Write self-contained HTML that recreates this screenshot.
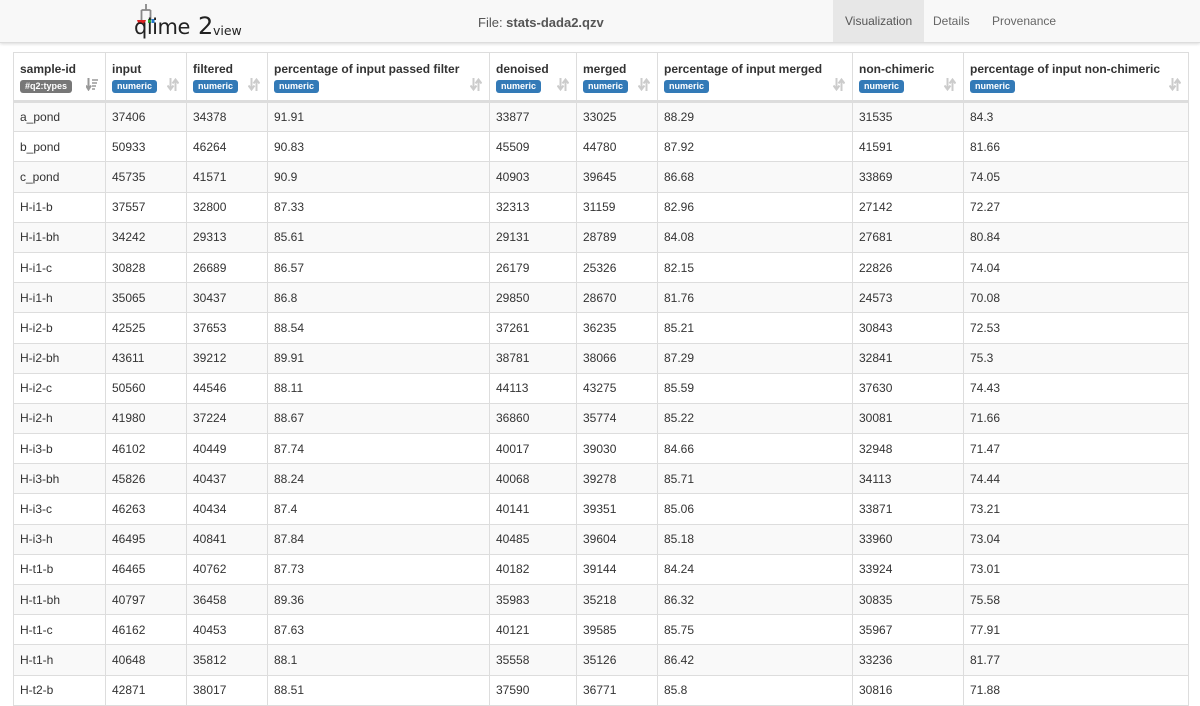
<!DOCTYPE html>
<html><head><meta charset="utf-8">
<style>
*{box-sizing:border-box;margin:0;padding:0}
body{width:1200px;height:687px;overflow:hidden;background:#fff;font-family:"Liberation Sans",Arial,sans-serif;font-size:12px;color:#333}
.nav{position:absolute;left:0;top:0;width:1200px;height:43px;background:#f8f8f8;border-bottom:1px solid #ddd;box-shadow:0 1px 3px rgba(0,0,0,.15)}
.logo{position:absolute;left:133px;top:3px}
.file{position:absolute;left:478px;top:15px;font-size:13px;color:#555}
.file b{color:#555}
.tab{position:absolute;top:0;height:42px;line-height:43px;font-size:12px;color:#666;padding:0 12px}
.tab.act{background:#e7e7e7;color:#555}
table{position:absolute;left:13px;top:52px;border-collapse:collapse;width:1175px;table-layout:fixed}
th,td{border:1px solid #ddd;text-align:left;padding:0 6px;vertical-align:middle}
th{height:49px;font-weight:bold;font-size:12px;position:relative;border-bottom:3px solid #ddd;vertical-align:top;padding-top:9px}
td{height:30.2px;font-size:12px}
tbody tr:nth-child(odd) td{background:#f9f9f9}
.b{display:inline-block;background:#337ab7;color:#fff;font-size:9px;font-weight:bold;padding:1px 5px 2px;border-radius:3px;margin-top:4px;line-height:10px}
.b.g{background:#777}
.s{position:absolute;right:7px;bottom:9px;width:12px;height:13px}
</style></head><body>
<svg width="0" height="0" style="position:absolute"><defs>
<symbol id="so" viewBox="0 0 12 13"><path d="M3.5 0v10M0.5 7.5l3 4 3-4M8.5 13v-10M5.5 5.5l3-4 3 4" stroke="#ccc" stroke-width="2" fill="none"/></symbol>
<symbol id="sa" viewBox="0 0 12 13"><path d="M2.5 0v10M0 7.5l2.5 4 2.5-4" stroke="#999" stroke-width="2" fill="none"/><path d="M6 2h6M6 5h5M6 8h4M6 11h3" stroke="#999" stroke-width="1.6"/></symbol>
</defs></svg>
<div class="nav">
<svg class="logo" width="130" height="36" viewBox="0 0 130 36">
<path d="M13 1v6M8.5 7h9M8.5 7v10M17.5 7v10" stroke="#888" stroke-width="1.8" fill="none"/>
<path d="M4 17h9l-1.5 4h-6z" fill="#d22"/>
<rect x="15" y="16" width="3" height="4" fill="#3a3"/><rect x="18.5" y="16" width="3" height="4" fill="#27c"/>
<text x="1" y="31" font-family="DejaVu Sans" font-size="21" fill="#222" letter-spacing="-0.5">qiime</text>
<text x="65" y="31" font-family="DejaVu Sans" font-size="24" fill="#222">2</text>
<text x="80" y="32" font-family="DejaVu Sans" font-size="12.5" fill="#222">view</text>
</svg>
<div class="file">File: <b>stats-dada2.qzv</b></div>
<div class="tab act" style="left:833px">Visualization</div>
<div class="tab" style="left:921px">Details</div>
<div class="tab" style="left:980px">Provenance</div>
</div>
<table>
<colgroup><col style="width:92px"><col style="width:81px"><col style="width:81px"><col style="width:222px"><col style="width:87px"><col style="width:81px"><col style="width:195px"><col style="width:111px"><col style="width:225px"></colgroup>
<thead><tr>
<th>sample-id<br><span class="b g">#q2:types</span><svg class="s"><use href="#sa"/></svg></th>
<th>input<br><span class="b">numeric</span><svg class="s"><use href="#so"/></svg></th>
<th>filtered<br><span class="b">numeric</span><svg class="s"><use href="#so"/></svg></th>
<th>percentage of input passed filter<br><span class="b">numeric</span><svg class="s"><use href="#so"/></svg></th>
<th>denoised<br><span class="b">numeric</span><svg class="s"><use href="#so"/></svg></th>
<th>merged<br><span class="b">numeric</span><svg class="s"><use href="#so"/></svg></th>
<th>percentage of input merged<br><span class="b">numeric</span><svg class="s"><use href="#so"/></svg></th>
<th>non-chimeric<br><span class="b">numeric</span><svg class="s"><use href="#so"/></svg></th>
<th>percentage of input non-chimeric<br><span class="b">numeric</span><svg class="s"><use href="#so"/></svg></th>
</tr></thead>
<tbody>
<tr><td>a_pond</td><td>37406</td><td>34378</td><td>91.91</td><td>33877</td><td>33025</td><td>88.29</td><td>31535</td><td>84.3</td></tr>
<tr><td>b_pond</td><td>50933</td><td>46264</td><td>90.83</td><td>45509</td><td>44780</td><td>87.92</td><td>41591</td><td>81.66</td></tr>
<tr><td>c_pond</td><td>45735</td><td>41571</td><td>90.9</td><td>40903</td><td>39645</td><td>86.68</td><td>33869</td><td>74.05</td></tr>
<tr><td>H-i1-b</td><td>37557</td><td>32800</td><td>87.33</td><td>32313</td><td>31159</td><td>82.96</td><td>27142</td><td>72.27</td></tr>
<tr><td>H-i1-bh</td><td>34242</td><td>29313</td><td>85.61</td><td>29131</td><td>28789</td><td>84.08</td><td>27681</td><td>80.84</td></tr>
<tr><td>H-i1-c</td><td>30828</td><td>26689</td><td>86.57</td><td>26179</td><td>25326</td><td>82.15</td><td>22826</td><td>74.04</td></tr>
<tr><td>H-i1-h</td><td>35065</td><td>30437</td><td>86.8</td><td>29850</td><td>28670</td><td>81.76</td><td>24573</td><td>70.08</td></tr>
<tr><td>H-i2-b</td><td>42525</td><td>37653</td><td>88.54</td><td>37261</td><td>36235</td><td>85.21</td><td>30843</td><td>72.53</td></tr>
<tr><td>H-i2-bh</td><td>43611</td><td>39212</td><td>89.91</td><td>38781</td><td>38066</td><td>87.29</td><td>32841</td><td>75.3</td></tr>
<tr><td>H-i2-c</td><td>50560</td><td>44546</td><td>88.11</td><td>44113</td><td>43275</td><td>85.59</td><td>37630</td><td>74.43</td></tr>
<tr><td>H-i2-h</td><td>41980</td><td>37224</td><td>88.67</td><td>36860</td><td>35774</td><td>85.22</td><td>30081</td><td>71.66</td></tr>
<tr><td>H-i3-b</td><td>46102</td><td>40449</td><td>87.74</td><td>40017</td><td>39030</td><td>84.66</td><td>32948</td><td>71.47</td></tr>
<tr><td>H-i3-bh</td><td>45826</td><td>40437</td><td>88.24</td><td>40068</td><td>39278</td><td>85.71</td><td>34113</td><td>74.44</td></tr>
<tr><td>H-i3-c</td><td>46263</td><td>40434</td><td>87.4</td><td>40141</td><td>39351</td><td>85.06</td><td>33871</td><td>73.21</td></tr>
<tr><td>H-i3-h</td><td>46495</td><td>40841</td><td>87.84</td><td>40485</td><td>39604</td><td>85.18</td><td>33960</td><td>73.04</td></tr>
<tr><td>H-t1-b</td><td>46465</td><td>40762</td><td>87.73</td><td>40182</td><td>39144</td><td>84.24</td><td>33924</td><td>73.01</td></tr>
<tr><td>H-t1-bh</td><td>40797</td><td>36458</td><td>89.36</td><td>35983</td><td>35218</td><td>86.32</td><td>30835</td><td>75.58</td></tr>
<tr><td>H-t1-c</td><td>46162</td><td>40453</td><td>87.63</td><td>40121</td><td>39585</td><td>85.75</td><td>35967</td><td>77.91</td></tr>
<tr><td>H-t1-h</td><td>40648</td><td>35812</td><td>88.1</td><td>35558</td><td>35126</td><td>86.42</td><td>33236</td><td>81.77</td></tr>
<tr><td>H-t2-b</td><td>42871</td><td>38017</td><td>88.51</td><td>37590</td><td>36771</td><td>85.8</td><td>30816</td><td>71.88</td></tr>
</tbody></table>
</body></html>
